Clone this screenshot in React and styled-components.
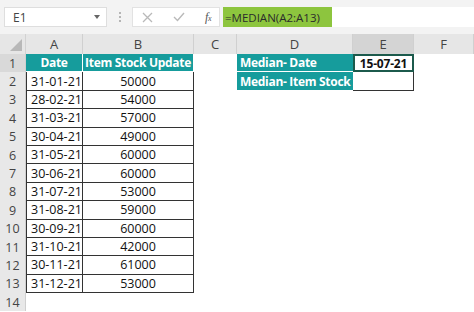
import styled, { createGlobalStyle } from "styled-components";

const GlobalStyle = createGlobalStyle`
	html, body {
		margin: 0;
		padding: 0;
		background: #ffffff;
		font-family: "Open Sans", "Liberation Sans", sans-serif;
	}
`;

const TEAL = "#169c9c";
const ROW_H = "18.4px";

const Page = styled.div`
	width: 474px;
	height: 312px;
	overflow: hidden;
	background: #fff;
`;

const Toolbar = styled.div`
	height: 34px;
	box-sizing: border-box;
	padding: 7px 0 7px 4px;
	display: flex;
	align-items: stretch;
	background: #f3f3f3;
`;

const NameBox = styled.div`
	width: 103px;
	box-sizing: border-box;
	background: #fff;
	border: 1px solid #dedede;
	display: flex;
	align-items: center;
	justify-content: space-between;
	padding: 0 6px 0 8px;
	font-size: 12px;
	color: #444;
`;

const Caret = styled.span`
	width: 0;
	height: 0;
	border-left: 3px solid transparent;
	border-right: 3px solid transparent;
	border-top: 4px solid #666;
`;

const Dots = styled.div`
	width: 25px;
	display: flex;
	flex-direction: column;
	align-items: center;
	justify-content: center;
	gap: 2px;

	span {
		width: 2px;
		height: 2px;
		background: #b5b5b5;
	}
`;

const FxBox = styled.div`
	width: 88px;
	box-sizing: border-box;
	background: #fff;
	border: 1px solid #e2e2e2;
	display: flex;
	align-items: center;
	justify-content: space-between;
	padding: 0 8px 0 9px;
`;

const FxLabel = styled.span`
	font-family: "Liberation Serif", serif;
	font-style: italic;
	font-size: 12px;
	color: #555;
	letter-spacing: -0.5px;

	sub {
		font-size: 8px;
		vertical-align: baseline;
	}
`;

const FormulaBar = styled.div`
	flex: 1;
	margin-left: 3px;
	background: #fff;
	display: flex;
	align-items: stretch;
`;

const Highlight = styled.div`
	width: 109px;
	background: #8dc53e;
	color: #2b2b2b;
	font-size: 11.5px;
	display: flex;
	align-items: center;
	padding-left: 2px;
	box-sizing: border-box;
`;

const Sheet = styled.div`
	display: grid;
	grid-template-columns: 26px 57px 111px 43px 116px 61px 1fr;
	grid-template-rows: 20px repeat(14, ${ROW_H});
`;

const Corner = styled.div`
	background: #e6e6e6;
	border-right: 1px solid #d2d2d2;
	position: relative;

	&::after {
		content: "";
		position: absolute;
		right: 3px;
		bottom: 3px;
		width: 0;
		height: 0;
		border-left: 12px solid transparent;
		border-bottom: 12px solid #b8b8b8;
	}
`;

const ColHead = styled.div`
	background: ${p => (p.$active ? "#d4d4d4" : "#e6e6e6")};
	border-right: 1px solid #d0d0d0;
	color: #444;
	font-size: 13px;
	display: flex;
	align-items: center;
	justify-content: center;
	box-sizing: border-box;
`;

const RowHead = styled.div`
	background: ${p => (p.$active ? "#d9d9d9" : "#e8e8e8")};
	border-right: 1px solid #cfcfcf;
	color: #444;
	font-size: 12.5px;
	display: flex;
	align-items: center;
	justify-content: center;
	box-sizing: border-box;
`;

const Cell = styled.div`
	box-sizing: border-box;
	display: flex;
	align-items: center;
	white-space: nowrap;
	overflow: hidden;
	font-size: 12.5px;
	color: #111;
	justify-content: ${p => (p.$center ? "center" : "flex-start")};
	padding-left: ${p => (p.$center ? "0" : "4px")};
`;

const HeadCell = styled(Cell)`
	background: ${TEAL};
	color: #fff;
	font-weight: 700;
	font-size: 12px;
	letter-spacing: -0.3px;
	border-right: 1px solid #fff;
	border-bottom: 1px solid #fff;
`;

const DataCell = styled(Cell)`
	border-right: 1px solid #333;
	border-bottom: 1px solid #333;
	border-left: ${p => (p.$first ? "1px solid #333" : "0")};
`;

const LabelCell = styled(HeadCell)`
	border-right: 0;
	padding-left: 3px;
`;

const ResultCell = styled(Cell)`
	font-weight: 700;
	font-size: 12px;
	letter-spacing: -0.2px;
	border: ${p => (p.$selected ? "2px solid #1c5a4c" : "1px solid #333")};
	border-top: ${p => (p.$selected ? "2px solid #1c5a4c" : "0")};
	border-left: ${p => (p.$selected ? "2px solid #1c5a4c" : "0")};
`;

const rows = [
	["31-01-21", "50000"],
	["28-02-21", "54000"],
	["31-03-21", "57000"],
	["30-04-21", "49000"],
	["31-05-21", "60000"],
	["30-06-21", "60000"],
	["31-07-21", "53000"],
	["31-08-21", "59000"],
	["30-09-21", "60000"],
	["31-10-21", "42000"],
	["30-11-21", "61000"],
	["31-12-21", "53000"],
];

const cols = ["A", "B", "C", "D", "E", "F"];

const Row = ({ n, date, qty }) => (
	<>
		<RowHead>{n}</RowHead>
		<DataCell $first>{date}</DataCell>
		<DataCell $center>{qty}</DataCell>
		<Cell />
		{n === 2 ? (
			<>
				<LabelCell>Median- Item Stock</LabelCell>
				<ResultCell $center />
			</>
		) : (
			<>
				<Cell />
				<Cell />
			</>
		)}
		<Cell />
	</>
);

const App = () => {
	return (
		<Page>
			<GlobalStyle />
			<Toolbar>
				<NameBox>
					E1
					<Caret />
				</NameBox>
				<Dots>
					<span />
					<span />
					<span />
				</Dots>
				<FxBox>
					<svg width="11" height="11" viewBox="0 0 11 11">
						<path d="M1 1 L10 10 M10 1 L1 10" stroke="#b9b9b9" strokeWidth="1.3" fill="none" />
					</svg>
					<svg width="12" height="10" viewBox="0 0 12 10">
						<path d="M1 5 L4.5 8.5 L11 1" stroke="#b9b9b9" strokeWidth="1.4" fill="none" />
					</svg>
					<FxLabel>
						f<sub>x</sub>
					</FxLabel>
				</FxBox>
				<FormulaBar>
					<Highlight>=MEDIAN(A2:A13)</Highlight>
				</FormulaBar>
			</Toolbar>
			<Sheet>
				<Corner />
				{cols.map(c => (
					<ColHead key={c} $active={c === "E"}>
						{c}
					</ColHead>
				))}

				<RowHead $active>1</RowHead>
				<HeadCell $center>Date</HeadCell>
				<HeadCell $center>Item Stock Update</HeadCell>
				<Cell />
				<LabelCell>Median- Date</LabelCell>
				<ResultCell $selected $center>15-07-21</ResultCell>
				<Cell />

				{rows.map(([date, qty], i) => (
					<Row key={date} n={i + 2} date={date} qty={qty} />
				))}

				<RowHead>14</RowHead>
			</Sheet>
		</Page>
	);
};

export default App;
